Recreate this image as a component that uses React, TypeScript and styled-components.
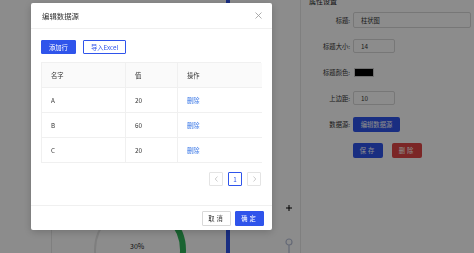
import React from "react";
import styled, {createGlobalStyle} from "styled-components";

const GlobalStyle = createGlobalStyle`
  html, body {
    margin: 0;
    padding: 0;
    background: #ffffff;
    font-family: "Noto Sans CJK SC", "Noto Sans", sans-serif;
    color: #333333;
  }
`;

const BLUE = "#2f54eb";

const Page = styled.div`
  display: flex;
  width: 474px;
  height: 253px;
  overflow: hidden;
  background: #ffffff;
`;

const Canvas = styled.div`
  position: relative;
  flex: 1;
  overflow: hidden;
`;

const CardEdge = styled.div`
  position: absolute;
  left: 51px;
  top: 222px;
  width: 1px;
  height: 40px;
  background: #e8e8e8;
`;

const Guide = styled.div`
  position: absolute;
  left: 226px;
  top: 0;
  width: 4px;
  height: 253px;
  background: ${BLUE};
`;

const Ring = styled.svg`
  position: absolute;
  left: 88px;
  top: 199px;
`;

const Percent = styled.span`
  position: absolute;
  left: 130px;
  top: 241px;
  font-size: 7px;
  line-height: 10px;
  color: #222;
`;

const ToolIcon = styled.svg<{ $top: number }>`
  position: absolute;
  left: 285px;
  top: ${(p) => p.$top}px;
`;

const Panel = styled.aside`
  width: 173px;
  border-left: 1px solid #e8e8e8;
  font-size: 6.3px;
`;

const PanelTitle = styled.div`
  margin: -3px 0 7px 8px;
  font-size: 7px;
  line-height: 8px;
  color: #222;
`;

const Form = styled.div`
  display: flex;
  flex-direction: column;
  gap: 10px;
`;

const Row = styled.div`
  display: grid;
  grid-template-columns: 49px 1fr;
  column-gap: 3px;
  align-items: center;
  height: 16px;
`;

const Label = styled.span`
  text-align: right;
  color: #333;
`;

const TextInput = styled.div<{ $w: number; $h?: number }>`
  box-sizing: border-box;
  width: ${(p) => p.$w}px;
  height: ${(p) => p.$h ?? 14}px;
  border: 1px solid #d9d9d9;
  border-radius: 2px;
  padding-left: 7px;
  display: flex;
  align-items: center;
  color: #333;
`;

const Swatch = styled.div`
  width: 18px;
  height: 7px;
  margin-left: 2px;
  background: #000;
  outline: 1px solid #ccc;
`;

const Actions = styled.div`
  display: flex;
  gap: 9px;
`;

const SolidButton = styled.button<{ $color?: string; $w: number }>`
  box-sizing: border-box;
  width: ${(p) => p.$w}px;
  height: 15px;
  padding: 0;
  border: none;
  border-radius: 2px;
  background: ${(p) => p.$color ?? BLUE};
  color: #fff;
  font-family: inherit;
  font-size: 6.3px;
  letter-spacing: ${(p) => (p.$w <= 30 ? "2px" : "0")};
`;

const Overlay = styled.div`
  position: fixed;
  inset: 0;
  background: rgba(0, 0, 0, 0.45);
`;

const Modal = styled.div`
  position: fixed;
  left: 31px;
  top: 3px;
  width: 241px;
  height: 227px;
  background: #fff;
  border-radius: 2px;
  box-shadow: 0 2px 8px rgba(0, 0, 0, 0.2);
  display: flex;
  flex-direction: column;
  font-size: 6.3px;
`;

const Header = styled.div`
  height: 26px;
  box-sizing: border-box;
  border-bottom: 1px solid #f0f0f0;
  padding: 0 10px 0 11px;
  display: flex;
  align-items: center;
  justify-content: space-between;
`;

const Title = styled.span`
  font-size: 7.4px;
  color: #333;
`;

const Body = styled.div`
  flex: 1;
  padding: 11px 11px 0 10px;
`;

const Toolbar = styled.div`
  display: flex;
  gap: 7px;
  margin-bottom: 8px;
`;

const ToolButton = styled.button<{ $primary?: boolean }>`
  box-sizing: border-box;
  height: 14px;
  padding: 0 7px;
  border-radius: 1px;
  border: 1px solid ${BLUE};
  background: ${(p) => (p.$primary ? BLUE : "#fff")};
  color: ${(p) => (p.$primary ? "#fff" : BLUE)};
  font-family: inherit;
  font-size: 6.3px;
`;

const Table = styled.div`
  display: grid;
  grid-template-columns: 84px 52px 84px;
  border: 1px solid #f0f0f0;
  border-bottom: none;
`;

const Cell = styled.div<{ $head?: boolean; $link?: boolean }>`
  height: 25px;
  box-sizing: border-box;
  display: flex;
  align-items: center;
  padding-left: 9px;
  border-bottom: 1px solid #f0f0f0;
  border-right: 1px solid #f0f0f0;
  background: ${(p) => (p.$head ? "#fafafa" : "#fff")};
  color: ${(p) => (p.$link ? "#3b78e7" : "#333")};

  &:nth-child(3n) {
    border-right: none;
  }
`;

const Pager = styled.div`
  display: flex;
  justify-content: flex-end;
  gap: 5px;
  margin-top: 9px;
`;

const PageBox = styled.div<{ $active?: boolean }>`
  box-sizing: border-box;
  width: 14px;
  height: 14px;
  border: 1px solid ${(p) => (p.$active ? BLUE : "#e4e4e4")};
  border-radius: 1px;
  display: flex;
  align-items: center;
  justify-content: center;
  color: ${(p) => (p.$active ? BLUE : "#c0c0c0")};
  font-size: 6.3px;
`;

const Footer = styled.div`
  height: 25px;
  box-sizing: border-box;
  border-top: 1px solid #f0f0f0;
  padding-right: 8px;
  display: flex;
  align-items: center;
  justify-content: flex-end;
  gap: 4px;
`;

const FooterButton = styled.button<{ $primary?: boolean }>`
  box-sizing: border-box;
  width: 29px;
  height: 15px;
  padding: 0;
  border-radius: 1px;
  border: 1px solid ${(p) => (p.$primary ? BLUE : "#d9d9d9")};
  background: ${(p) => (p.$primary ? BLUE : "#fff")};
  color: ${(p) => (p.$primary ? "#fff" : "#333")};
  font-family: inherit;
  font-size: 6.3px;
  letter-spacing: 2px;
`;

const rows = [
  {name: "A", value: 20},
  {name: "B", value: 60},
  {name: "C", value: 20},
];

const Chevron = ({dir}: { dir: "left" | "right" }) => (
  <svg width="5" height="6" viewBox="0 0 5 6">
    <path
      d={dir === "left" ? "M3.5 0.5 L1.2 3 L3.5 5.5" : "M1.5 0.5 L3.8 3 L1.5 5.5"}
      fill="none"
      stroke="#c0c0c0"
      strokeWidth="0.8"
    />
  </svg>
);

const App: React.FC = () => {
  const c = 2 * Math.PI * 44;

  return (
    <>
      <GlobalStyle/>
      <Page>
        <Canvas>
          <CardEdge/>
          <Ring width="102" height="102" viewBox="0 0 102 102">
            <circle cx="51" cy="51" r="44" fill="none" stroke="#e6e6e6" strokeWidth="2"/>
            <circle
              cx="51"
              cy="51"
              r="44"
              fill="none"
              stroke="#2fb55a"
              strokeWidth="6"
              strokeDasharray={`${c * 0.3} ${c}`}
              transform="rotate(-90 51 51)"
            />
          </Ring>
          <Percent>30%</Percent>
          <Guide/>
          <ToolIcon $top={204} width="8" height="8" viewBox="0 0 8 8">
            <path d="M4 1 V7 M1 4 H7" stroke="#000" strokeWidth="1"/>
          </ToolIcon>
          <ToolIcon $top={237} width="8" height="16" viewBox="0 0 8 16">
            <circle cx="4" cy="5" r="3" fill="none" stroke="#b8c0d8" strokeWidth="1.2"/>
            <path d="M4 8 V16" stroke="#b8c0d8" strokeWidth="1.2"/>
          </ToolIcon>
        </Canvas>
        <Panel>
          <PanelTitle>属性设置</PanelTitle>
          <Form>
            <Row>
              <Label>标题:</Label>
              <TextInput $w={118} $h={16}>柱状图</TextInput>
            </Row>
            <Row>
              <Label>标题大小:</Label>
              <TextInput $w={42}>14</TextInput>
            </Row>
            <Row>
              <Label>标题颜色:</Label>
              <Swatch/>
            </Row>
            <Row>
              <Label>上边距:</Label>
              <TextInput $w={42}>10</TextInput>
            </Row>
            <Row>
              <Label>数据源:</Label>
              <div><SolidButton $w={47}>编辑数据源</SolidButton></div>
            </Row>
            <Row>
              <span/>
              <Actions>
                <SolidButton $w={30}>保存</SolidButton>
                <SolidButton $w={30} $color="#e04545">删除</SolidButton>
              </Actions>
            </Row>
          </Form>
        </Panel>
      </Page>
      <Overlay/>
      <Modal>
        <Header>
          <Title>编辑数据源</Title>
          <svg width="7" height="7" viewBox="0 0 7 7">
            <path d="M0.5 0.5 L6.5 6.5 M6.5 0.5 L0.5 6.5" stroke="#999" strokeWidth="0.8"/>
          </svg>
        </Header>
        <Body>
          <Toolbar>
            <ToolButton $primary>添加行</ToolButton>
            <ToolButton>导入Excel</ToolButton>
          </Toolbar>
          <Table>
            <Cell $head>名字</Cell>
            <Cell $head>值</Cell>
            <Cell $head>操作</Cell>
            {rows.map((r) => (
              <React.Fragment key={r.name}>
                <Cell>{r.name}</Cell>
                <Cell>{r.value}</Cell>
                <Cell $link>删除</Cell>
              </React.Fragment>
            ))}
          </Table>
          <Pager>
            <PageBox><Chevron dir="left"/></PageBox>
            <PageBox $active>1</PageBox>
            <PageBox><Chevron dir="right"/></PageBox>
          </Pager>
        </Body>
        <Footer>
          <FooterButton>取消</FooterButton>
          <FooterButton $primary>确定</FooterButton>
        </Footer>
      </Modal>
    </>
  );
};

export default App;
